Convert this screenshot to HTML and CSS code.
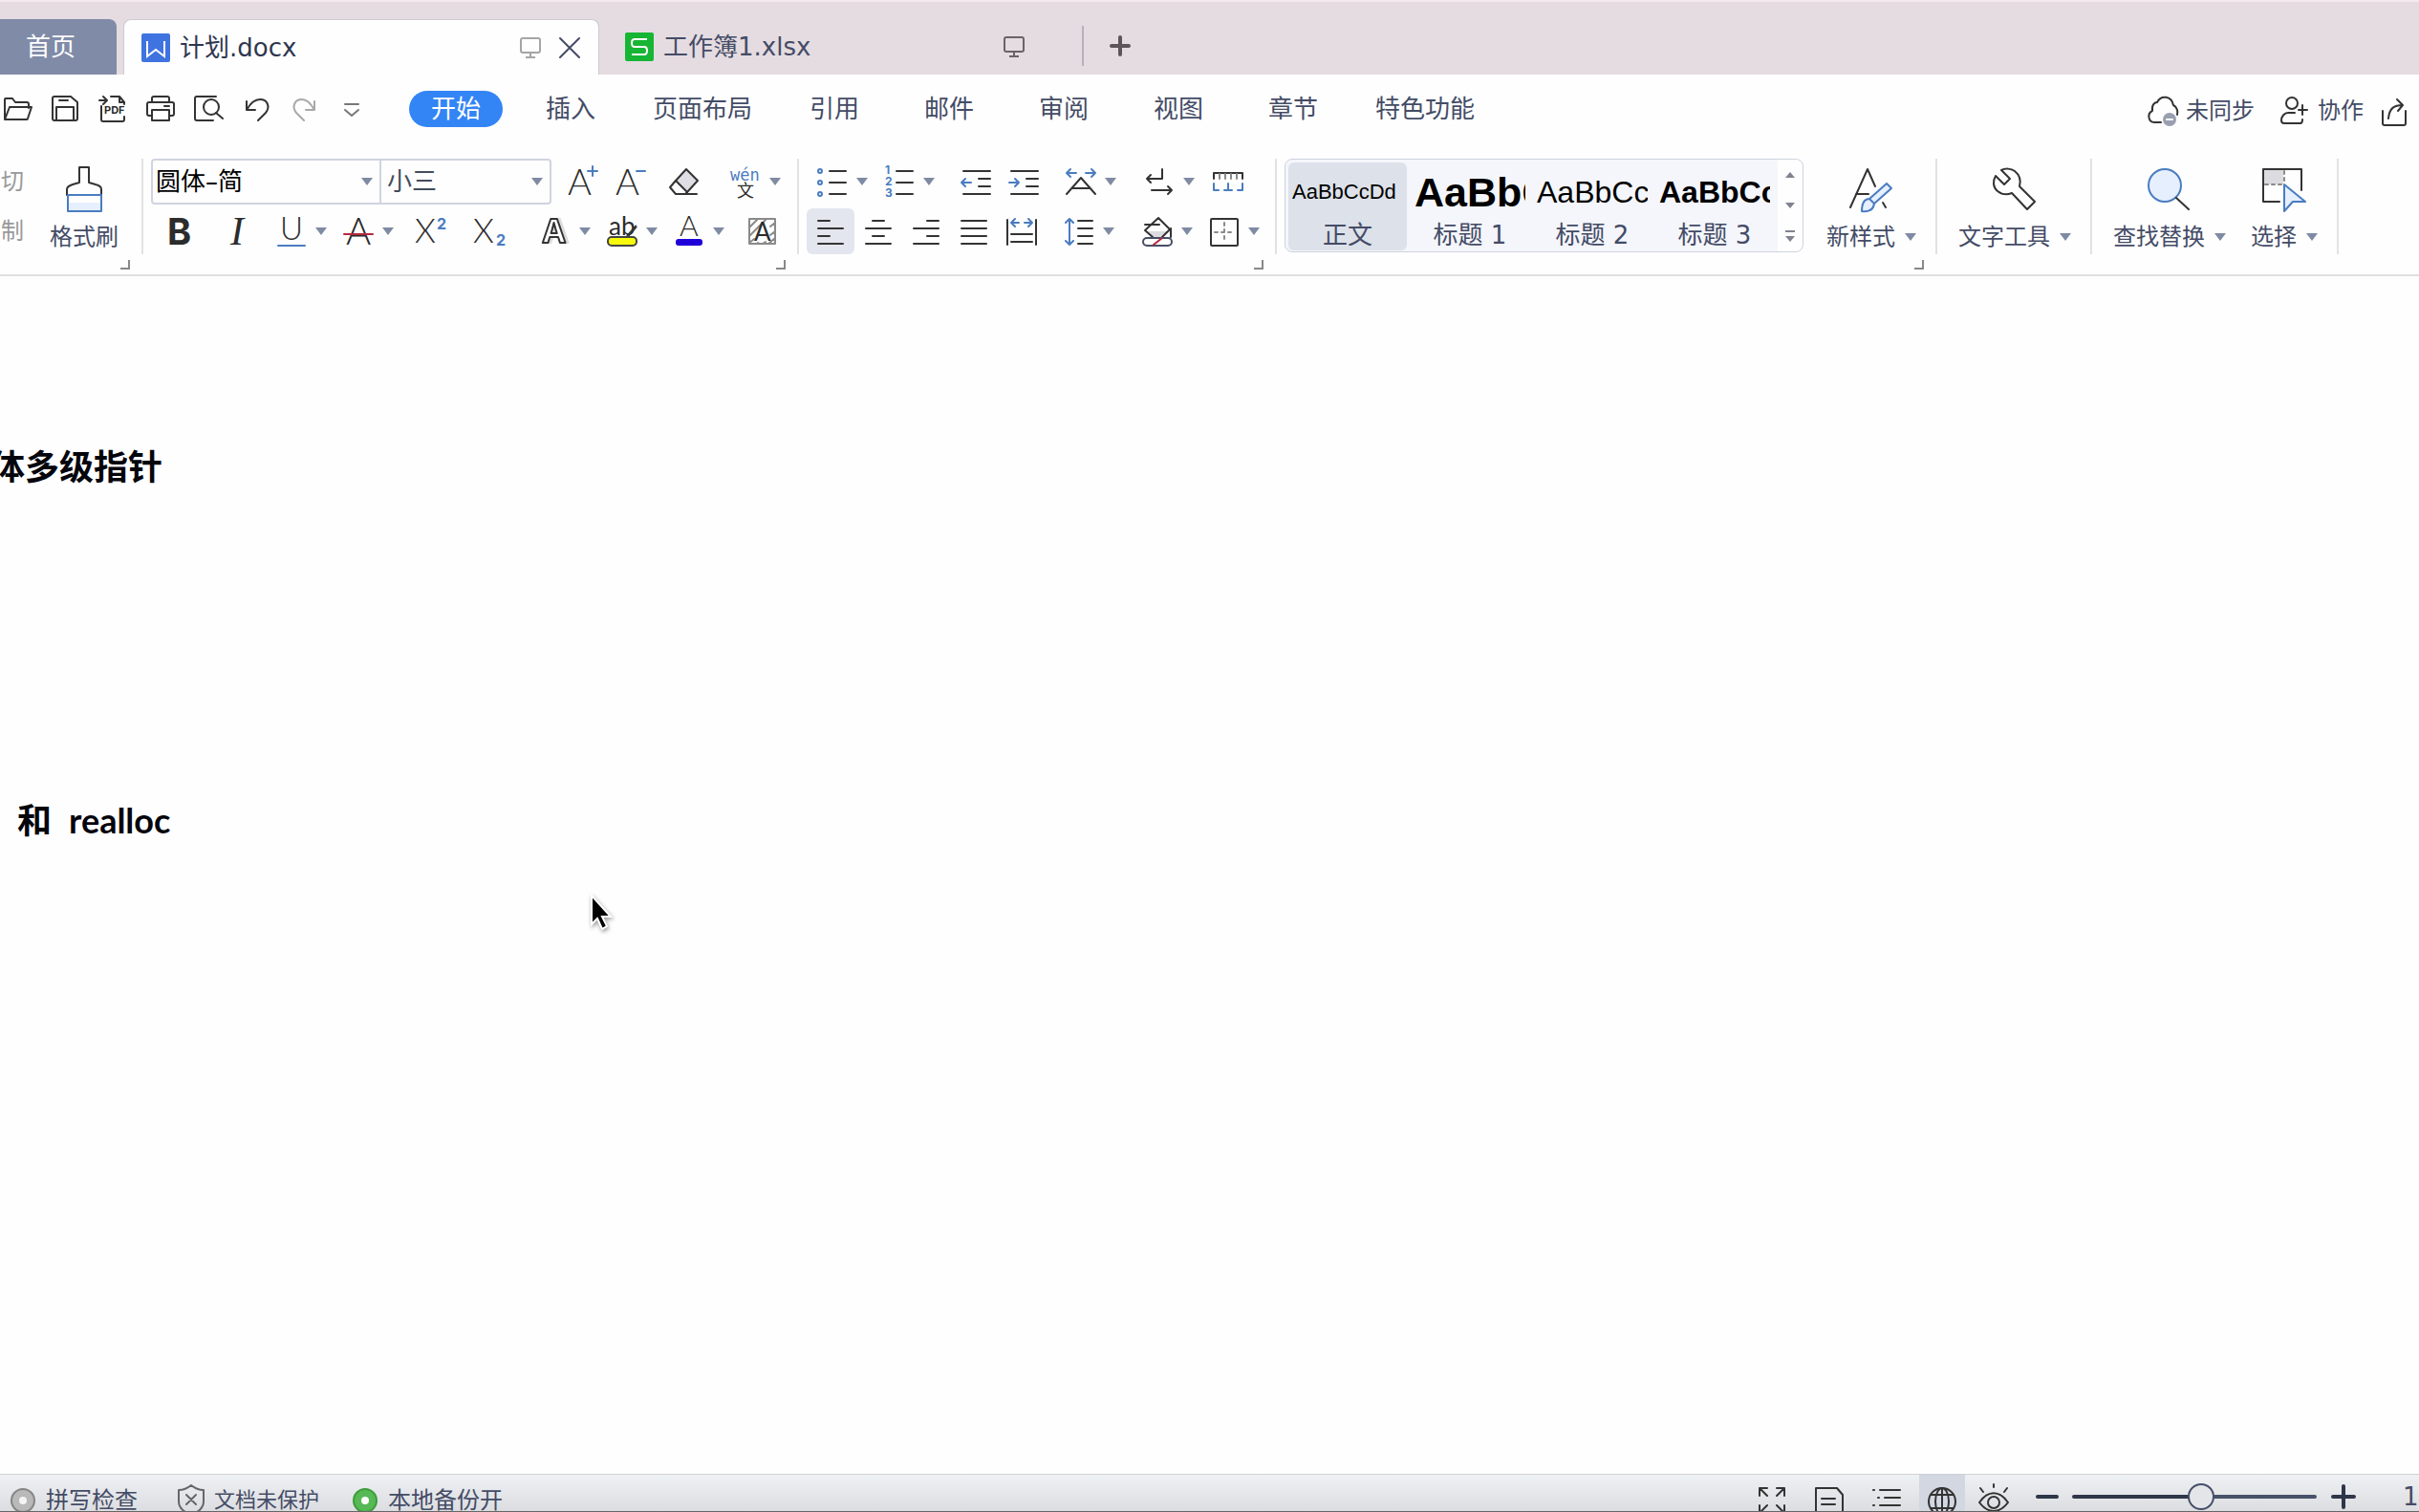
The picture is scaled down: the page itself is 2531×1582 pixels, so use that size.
FILE: index.html
```
<!DOCTYPE html>
<html lang="zh-CN">
  <head>
    <meta charset="UTF-8" />
    <meta name="viewport" content="width=device-width,initial-scale=1.0" />
    <title>计划.docx</title>
    <link rel="stylesheet" href="styles.css">
  </head>
  <body>
    <!-- shared shapes -->
    <svg class="defs" aria-hidden="true">
      <symbol id="caret" viewBox="0 0 12 8"><path d="M0 0h12L6 8z"/></symbol>
      <symbol id="monitor" viewBox="0 0 24 24"><rect x="2" y="2" width="20" height="15" rx="2"/><path d="M12 17v5M7 22h10"/></symbol>
    </svg>

    <header class="tabbar">
      <button class="tab home">首页</button>
      <div class="tab doc active">
        <svg class="logo" viewBox="0 0 30 30"><rect width="30" height="30" rx="2" fill="#3f73e0"/><path d="M6 8v16l9-7 9 7V8" fill="none" stroke="#fff" stroke-width="2"/></svg>
        <span class="name">计划.docx</span>
        <svg class="screen"><use href="#monitor"/></svg>
        <button class="close" aria-label="关闭"><svg class="icon" viewBox="0 0 32 32"><path d="M6 6l20 20M26 6L6 26"/></svg></button>
      </div>
      <div class="tab doc sheet">
        <svg class="logo" viewBox="0 0 30 30"><rect width="30" height="30" rx="2" fill="#17b534"/><path d="M23 7H10q-3 0-3 4t3 4h10q3 0 3 4t-3 4H7" fill="none" stroke="#fff" stroke-width="2"/></svg>
        <span class="name">工作簿1.xlsx</span>
        <svg class="screen"><use href="#monitor"/></svg>
      </div>
      <button class="add" aria-label="新建"><svg class="icon" viewBox="0 0 32 32"><path d="M16 7v18M7 16h18"/></svg></button>
    </header>

    <div class="menubar">
      <div class="quick">
        <button class="tool" aria-label="打开"><svg class="icon" viewBox="0 0 32 32"><path d="M3 27V6q0-1 1-1h7l3 4h12q2 0 2 2v4M3 27l5-13h23l-4 12q0 1-1 1z"/></svg></button>
        <button class="tool" aria-label="保存"><svg class="icon" viewBox="0 0 32 32"><path d="M5 3h17l7 6v17q0 2-2 2H5q-2 0-2-2V5q0-2 2-2zM7 28V14h18v14M10 7h9"/></svg></button>
        <button class="tool" aria-label="输出为PDF"><svg class="icon" viewBox="0 0 32 32"><path d="M14 3h9l5 6v2M23 3v6h5M4 13v14M4 27q0 2 2 2h20q2 0 2-2v-3M2 7h7M6 3l4 4-4 4"/><text x="7" y="21" class="bold" font-size="11">PDF</text></svg></button>
        <button class="tool" aria-label="打印"><svg class="icon" viewBox="0 0 32 32"><path d="M7 9V5q0-2 2-2h14q2 0 2 2v4M7 23H4q-2 0-2-2V11q0-2 2-2h24q2 0 2 2v10q0 2-2 2h-3M7 17h18v11H7zM20 13h5"/></svg></button>
        <button class="tool" aria-label="打印预览"><svg class="icon" viewBox="0 0 32 32"><path d="M24 3H4Q2 3 2 5v21q0 2 2 2h17"/><circle cx="19" cy="14" r="8"/><path d="M24 20l7 6"/></svg></button>
        <button class="tool" aria-label="撤销"><svg class="icon" viewBox="0 0 32 32"><path d="M6 8v9h9M6 17c4-7 9-11 14-11 8 0 11 8 6 14l-8 8"/></svg></button>
        <button class="tool faded" aria-label="恢复"><svg class="icon" viewBox="0 0 32 32"><path d="M27 8v9h-9M27 17C23 10 19 6 14 6 6 6 3 14 8 20l8 8"/></svg></button>
        <button class="tool more" aria-label="自定义"><svg class="icon" viewBox="0 0 32 32"><path d="M9 11h14M9 17l7 6 7-6"/></svg></button>
      </div>
      <nav class="menu">
        <a href="#" class="current">开始</a>
        <a href="#">插入</a>
        <a href="#">页面布局</a>
        <a href="#">引用</a>
        <a href="#">邮件</a>
        <a href="#">审阅</a>
        <a href="#">视图</a>
        <a href="#">章节</a>
        <a href="#">特色功能</a>
      </nav>
      <div class="account">
        <button class="sync"><svg class="icon" viewBox="0 0 32 32"><path d="M14 28H7C1 28-1 19 5 16 4 9 8 7 10 7c4-8 15-7 17 3 4 2 5 7 4 10"/><circle cx="23" cy="25" r="7" class="dot"/><path d="M20 25h6" class="white"/></svg>未同步</button>
        <button><svg class="icon" viewBox="0 0 32 32"><circle cx="13" cy="8" r="6"/><path d="M16 18H9c-4 0-7 4-7 8 0 2 1 3 3 3h17c2 0 2-2 2-4M20 15h9M24 10v10"/></svg>协作</button>
        <button aria-label="分享"><svg class="icon" viewBox="0 0 32 32"><path d="M4 16v13q0 2 2 2h20q2 0 2-2V16M10 24C11 13 16 10 25 10M19 4l6 6-5 6"/></svg></button>
      </div>
    </div>

    <div class="ribbon">
      <section class="group clipboard">
        <div class="cut">
          <button>剪切</button>
          <button>复制</button>
        </div>
        <button class="big">
          <svg class="icon" viewBox="0 0 48 48"><path d="M6 30v-6c0-3 3-4 6-5l7-2V1h10v16l7 2c4 1 6 2 6 5v6"/><rect x="7" y="30" width="35" height="17" class="blue"/><path d="M8 38h33v8H8z" class="tint"/></svg>
          <span>格式刷</span>
        </button>
        <i class="corner"></i>
      </section>

      <section class="group font">
        <div class="row">
          <div class="combo family">
            <select aria-label="字体"><option>圆体–简</option></select>
            <svg class="caret"><use href="#caret"/></svg>
          </div>
          <div class="combo size">
            <select aria-label="字号"><option>小三</option></select>
            <svg class="caret"><use href="#caret"/></svg>
          </div>
          <button class="tool sp-8" aria-label="增大字号"><svg class="icon" viewBox="0 0 32 32"><text x="0" y="30" font-size="38">A</text><path d="M21 5h10M26 0v10" class="blue"/></svg></button>
          <button class="tool" aria-label="减小字号"><svg class="icon" viewBox="0 0 32 32"><text x="0" y="30" font-size="38">A</text><path d="M22 5h9" class="blue"/></svg></button>
          <button class="tool wide" aria-label="清除格式"><svg class="icon" viewBox="0 0 32 32"><path d="M19 3l12 12-11 12L8 15z" class="grey"/><path d="M8 15l-6 7 6 7h22M20 27l-2 2"/></svg></button>
          <button class="split sp-12" aria-label="拼音指南"><svg class="icon" viewBox="0 0 32 32"><text x="0" y="15" class="mono bluetext" font-size="17">wén</text><text x="7" y="32" class="cjk" font-size="18">文</text></svg><svg class="caret"><use href="#caret"/></svg></button>
        </div>
        <div class="row">
          <button class="tool wide" aria-label="加粗"><svg class="icon" viewBox="0 0 32 32"><text x="3" y="30" class="bold" font-size="38">B</text></svg></button>
          <button class="tool wide" aria-label="倾斜"><svg class="icon" viewBox="0 0 32 32"><text x="9" y="30" class="slant" font-size="42">I</text></svg></button>
          <button class="split sp-4" aria-label="下划线"><svg class="icon" viewBox="0 0 32 32"><text x="4" y="25" font-size="33">U</text><path d="M2 31h28" class="blue"/></svg><svg class="caret"><use href="#caret"/></svg></button>
          <button class="split" aria-label="删除线"><svg class="icon" viewBox="0 0 32 32"><text x="3" y="30" font-size="40">A</text><path d="M1 19h30" class="red"/></svg><svg class="caret"><use href="#caret"/></svg></button>
          <button class="tool wide" aria-label="上标"><svg class="icon" viewBox="0 0 32 32"><text x="-2" y="28" font-size="35">X</text><text x="21" y="14" class="bold bluetext" font-size="16">2</text></svg></button>
          <button class="tool wide" aria-label="下标"><svg class="icon" viewBox="0 0 32 32"><text x="-1" y="28" font-size="35">X</text><text x="23" y="31" class="bold bluetext" font-size="16">2</text></svg></button>
          <button class="split sp-16" aria-label="文字效果"><svg class="icon" viewBox="0 0 32 32"><text x="2" y="28" class="bold hollow" font-size="34">A</text></svg><svg class="caret"><use href="#caret"/></svg></button>
          <button class="split" aria-label="突出显示"><svg class="icon" viewBox="0 0 32 32"><text x="2" y="20" class="regular" font-size="26">ab</text><path d="M30 10l-8 9-2 3 3-1 8-9z" class="ink"/><rect x="1" y="22" width="30" height="9" rx="4" class="yellow"/></svg><svg class="caret"><use href="#caret"/></svg></button>
          <button class="split" aria-label="字体颜色"><svg class="icon" viewBox="0 0 32 32"><text x="6" y="21" font-size="30">A</text><rect x="3" y="25" width="26" height="5" rx="2" class="indigo"/></svg><svg class="caret"><use href="#caret"/></svg></button>
          <button class="tool wide" aria-label="字符底纹"><svg class="icon" viewBox="0 0 32 32"><path d="M2 3h27v26H2zM2 12l9-9M2 21L20 3M12 29l-1-1M2 28l5-4M24 11l5-4M24 20l5-4M16 29l3-2M22 29l7-6" class="hatch"/><text x="7" y="26" class="regular" font-size="26">A</text></svg></button>
        </div>
        <i class="corner"></i>
      </section>

      <section class="group para">
        <div class="row">
          <button class="split sp-4" aria-label="项目符号"><svg class="icon" viewBox="0 0 32 32"><path d="M13 5h17M13 17h17M13 29h17"/><g class="blue"><circle cx="3" cy="5" r="2"/><circle cx="3" cy="17" r="2"/><circle cx="3" cy="29" r="2"/></g></svg><svg class="caret"><use href="#caret"/></svg></button>
          <button class="split" aria-label="编号"><svg class="icon" viewBox="0 0 32 32"><path d="M13 5h17M13 17h17M13 29h17"/><text x="1" y="8" class="bold bluetext" font-size="12">1</text><text x="1" y="20" class="bold bluetext" font-size="12">2</text><text x="1" y="32" class="bold bluetext" font-size="12">3</text></svg><svg class="caret"><use href="#caret"/></svg></button>
          <button class="tool sp-8" aria-label="减少缩进"><svg class="icon" viewBox="0 0 32 32"><path d="M3 5h28M19 13h12M19 21h12M3 29h28"/><path d="M1 17h10M5 13l-4 4 4 4" class="blue"/></svg></button>
          <button class="tool" aria-label="增加缩进"><svg class="icon" viewBox="0 0 32 32"><path d="M3 5h28M19 13h12M19 21h12M3 29h28"/><path d="M1 17h10M7 13l4 4-4 4" class="blue"/></svg></button>
          <button class="split sp-12" aria-label="中文版式"><svg class="icon" viewBox="0 0 32 32"><path d="M1 29l15-17 15 17M7 23h18"/><path d="M1 7h10M5 3L1 7l4 4M21 7h10M27 3l4 4-4 4" class="blue"/></svg><svg class="caret"><use href="#caret"/></svg></button>
          <button class="split sp-12" aria-label="换行符"><svg class="icon" viewBox="0 0 32 32"><path d="M19 3v10H3M7 9l-4 4 4 4M8 25h21M25 21l4 4-4 4"/></svg><svg class="caret"><use href="#caret"/></svg></button>
          <button class="tool" aria-label="标尺"><svg class="icon" viewBox="0 0 32 32"><path d="M1 13V7h30v6"/><path d="M7 8v5M13 8v5M19 8v5M25 8v5" class="hatch"/><path d="M1 18v7h5M31 18v7h-5M16 18v7M12 25h8" class="blue"/></svg></button>
        </div>
        <div class="row">
          <button class="tool on" aria-label="左对齐"><svg class="icon" viewBox="0 0 32 32"><path d="M3 5h12M3 13h26M3 21h12M3 29h26"/></svg></button>
          <button class="tool" aria-label="居中"><svg class="icon" viewBox="0 0 32 32"><path d="M10 5h12M3 13h26M10 21h12M3 29h26"/></svg></button>
          <button class="tool" aria-label="右对齐"><svg class="icon" viewBox="0 0 32 32"><path d="M17 5h12M3 13h26M17 21h12M3 29h26"/></svg></button>
          <button class="tool" aria-label="两端对齐"><svg class="icon" viewBox="0 0 32 32"><path d="M3 5h26M3 13h26M3 21h26M3 29h26"/></svg></button>
          <button class="tool" aria-label="分散对齐"><svg class="icon" viewBox="0 0 32 32"><path d="M1 4v26M31 4v26M5 19h22M5 27h22"/><path d="M5 7h8M9 3L5 7l4 4M19 7h8M23 3l4 4-4 4" class="blue"/></svg></button>
          <button class="split sp-12" aria-label="行距"><svg class="icon" viewBox="0 0 32 32"><path d="M15 5h15M15 13h15M15 21h15M15 29h15"/><path d="M6 3v27M2 7l4-4 4 4M2 26l4 4 4-4" class="blue"/></svg><svg class="caret"><use href="#caret"/></svg></button>
          <button class="split sp-12" aria-label="底纹颜色"><svg class="icon" viewBox="0 0 32 32"><path d="M5 16h22l-6 6H10z" class="shade"/><path d="M11 22l-8-7L17 2l12 12-8 8M3 9h15M30 13v9"/><rect x="1" y="23" width="30" height="8" rx="4" class="slate"/><path d="M12 30l9-7" class="red"/></svg><svg class="caret"><use href="#caret"/></svg></button>
          <button class="split" aria-label="边框"><svg class="icon" viewBox="0 0 32 32"><rect x="2" y="3" width="28" height="28" rx="1"/><path d="M16 7v20M6 17h20" class="hatch dash"/></svg><svg class="caret"><use href="#caret"/></svg></button>
        </div>
        <i class="corner"></i>
      </section>

      <section class="group styles">
        <div class="gallery">
          <button class="style normal on"><span class="preview">AaBbCcDd</span><span class="label">正文</span></button>
          <button class="style h1"><span class="preview">AaBbC</span><span class="label">标题 1</span></button>
          <button class="style h2"><span class="preview">AaBbCc</span><span class="label">标题 2</span></button>
          <button class="style h3"><span class="preview">AaBbCc</span><span class="label">标题 3</span></button>
          <div class="scroller">
            <button aria-label="上一行"><svg viewBox="0 0 12 12"><path d="M1 9l5-6 5 6z"/></svg></button>
            <button aria-label="下一行"><svg viewBox="0 0 12 12"><path d="M1 3l5 6 5-6z"/></svg></button>
            <button aria-label="更多样式"><svg viewBox="0 0 12 12"><path d="M1 0h10v2H1zM1 6l5 6 5-6z"/></svg></button>
          </div>
        </div>
        <button class="big">
          <svg class="icon" viewBox="0 0 48 48"><path d="M2 43L20 3l8 18M8 29h13M36 38l3 5"/><path d="M40 18l5 5-18 16-5-5zM22 34c-6 0-8 5-8 13 7 1 12-1 13-8" class="blue lit"/></svg>
          <span>新样式<svg class="caret"><use href="#caret"/></svg></span>
        </button>
        <i class="corner"></i>
      </section>

      <section class="group">
        <button class="big">
          <svg class="icon" viewBox="0 0 48 48"><path d="M10 4l9 9-6 6-9-9c-3 5-3 12 2 16 5 4 10 4 15 2l16 17 8-8-16-16c2-7 0-12-5-16-4-3-10-3-14-1z"/></svg>
          <span>文字工具<svg class="caret"><use href="#caret"/></svg></span>
        </button>
      </section>

      <section class="group">
        <button class="big">
          <svg class="icon" viewBox="0 0 48 48"><circle cx="19" cy="20" r="17" class="blue lit"/><path d="M31 33l13 12"/></svg>
          <span>查找替换<svg class="caret"><use href="#caret"/></svg></span>
        </button>
        <button class="big next">
          <svg class="icon" viewBox="0 0 48 48"><path d="M3 4h20v15H3z" class="block"/><path d="M42 25V3H2v34h17"/><path d="M24 5v13M4 19h19" class="hatch dash"/><path d="M24 19l22 18H33l-9 10z" class="blue lit"/></svg>
          <span>选择<svg class="caret"><use href="#caret"/></svg></span>
        </button>
      </section>
    </div>

    <main class="document">
      <p>体多级指针</p>
      <p class="second"><span>和</span><span>realloc</span></p>
      <svg class="pointer" viewBox="0 0 24 38"><path d="M2 2v30l6-6 5 11 5-3-5-10h9z"/></svg>
    </main>

    <footer class="statusbar">
      <div class="checks">
        <button class="spell"><svg viewBox="0 0 28 28"><circle cx="14" cy="14" r="12" fill="#b9b9b9" stroke="#858585" stroke-width="2"/><circle cx="14" cy="14" r="4" fill="#f4f4f4"/></svg>拼写检查</button>
        <button class="protect"><svg class="icon" viewBox="0 0 32 32"><path d="M16 0q6 5 13 5v12q0 9-13 14Q3 26 3 17V5q7 0 13-5zM11 10l10 10M21 10L11 20"/></svg>文档未保护</button>
        <button class="backup"><svg viewBox="0 0 28 28"><circle cx="14" cy="14" r="12" fill="#56b956" stroke="#3e9d3b" stroke-width="2"/><circle cx="14" cy="14" r="4" fill="#fff"/></svg>本地备份开</button>
      </div>
      <div class="views">
        <button aria-label="全屏"><svg class="icon" viewBox="0 0 32 32"><path d="M3 11V3h8M3 3l8 8M29 11V3h-8M29 3l-8 8M3 21v8h8M3 29l8-8M29 21v8h-8M29 29l-8-8"/></svg></button>
        <button aria-label="页面视图"><svg class="icon" viewBox="0 0 32 32"><path d="M2 3h22l6 7v20H2zM8 14h14M8 20h14"/></svg></button>
        <button aria-label="大纲"><svg class="icon" viewBox="0 0 32 32"><path d="M9 5h21M14 13h16M9 21h21M2 5h1M7 13h1M2 21h1"/></svg></button>
        <button class="on" aria-label="Web版式"><svg class="icon" viewBox="0 0 32 32"><circle cx="16" cy="17" r="14"/><ellipse cx="16" cy="17" rx="7" ry="14"/><path d="M16 3v28M4 10h24M4 24h24"/></svg></button>
        <button class="eye" aria-label="护眼模式"><svg class="icon" viewBox="0 0 32 32"><path d="M1 18C10 5 22 5 31 18 22 30 10 30 1 18zM16-1v3M2 3l3 4M30 3l-3 4"/><circle cx="16" cy="18" r="6"/></svg></button>
        <div class="zoom">
          <button class="minus" aria-label="缩小"><svg class="icon" viewBox="0 0 32 32"><path d="M6 16h20"/></svg></button>
          <input type="range" min="0" max="100" value="53" aria-label="显示比例">
          <button class="plus" aria-label="放大"><svg class="icon" viewBox="0 0 32 32"><path d="M5 16h22M16 5v22"/></svg></button>
          <span class="percent">1</span>
        </div>
      </div>
    </footer>
  </body>
</html>
```

FILE: styles.css
```
* {
  box-sizing: border-box;
}
body {
  margin: 0;
  height: 100vh;
  display: flex;
  flex-direction: column;
  overflow: hidden;
  background-color: #fefefe;
  color: #444c66;
  font-family: "DejaVu Sans", "Noto Sans CJK SC", sans-serif;
  font-size: 24px;
  line-height: 32px;
}
button {
  display: flex;
  align-items: center;
  justify-content: center;
  flex: none;
  padding: 0;
  border: none;
  background: none;
  color: inherit;
  font: inherit;
  white-space: nowrap;
  cursor: pointer;
}
svg {
  flex: none;
  overflow: visible;
}
.defs {
  position: absolute;
  width: 0;
  height: 0;
}

/* icons */
.icon {
  width: 32px;
  height: 32px;
  fill: none;
  stroke: #333;
  stroke-width: 2;
  stroke-linecap: round;
  stroke-linejoin: round;
}
.icon text {
  fill: #2c2c2c;
  stroke: none;
  font-family: Lato, sans-serif;
  font-weight: 300;
}
.icon .regular {
  font-weight: 400;
}
.icon .bold {
  font-family: Inter, sans-serif;
  font-weight: 700;
}
.icon .mono {
  font-family: "DejaVu Sans Mono", monospace;
  font-weight: 400;
}
.icon .cjk {
  font-family: "Noto Sans CJK SC", sans-serif;
  font-weight: 400;
}
.icon .slant {
  font-family: "Liberation Serif", serif;
  font-style: italic;
  font-weight: 400;
}
.icon .bluetext {
  fill: #4a7cc0;
}
.icon .hollow {
  fill: #fff;
  stroke: #333;
  filter: drop-shadow(3px 0 0 #ddd);
}
.blue {
  stroke: #4a7cc0;
}
.lit {
  fill: #e6effd;
}
.tint {
  fill: #e6effd;
  stroke: none;
}
.red {
  stroke: #b5273f;
}
.grey {
  fill: #dedee4;
}
.shade,
.block {
  fill: #dcdce0;
  stroke: none;
}
.yellow {
  fill: #f7fb0a;
  stroke: #444;
}
.indigo {
  fill: #1f00d8;
  stroke: #1f00d8;
}
.slate {
  fill: #fff;
  stroke: #474e66;
}
.hatch {
  stroke: #8a8a8a;
}
.dash {
  stroke-dasharray: 3 4;
}
.ink {
  fill: #333;
  stroke-width: 1;
}
.dot {
  fill: #9a9fb0;
  stroke: none;
}
.white {
  stroke: #fff;
}
.caret {
  width: 12px;
  height: 8px;
  fill: #7f8aa3;
}

/* document tabs */
.tabbar {
  display: flex;
  align-items: flex-end;
  flex: none;
  height: 78px;
  border-top: 2px solid #f3e9ee;
  background-color: #e5dce1;
  font-size: 26px;
}
.tab {
  display: flex;
  align-items: center;
  height: 58px;
}
.home {
  width: 122px;
  margin-right: 7px;
  padding-right: 16px;
  border-radius: 0 8px 0 0;
  background-color: #808ba8;
  color: #fff;
}
.doc {
  width: 498px;
  padding: 0 14px 0 18px;
}
.active {
  border: 1px solid #cdcbd2;
  border-bottom: none;
  border-radius: 8px 8px 0 0;
  background-color: #fefefe;
  color: #2f3650;
}
.sheet {
  width: 505px;
  padding: 0 59px 0 27px;
}
.logo {
  width: 30px;
  height: 30px;
  margin-right: 10px;
}
.name {
  flex: 1;
}
.screen {
  width: 24px;
  height: 24px;
  fill: none;
  stroke: #a5a5a5;
  stroke-width: 2;
}
.sheet .screen {
  stroke: #6b6268;
}
.close {
  margin-left: 13px;
}
.close .icon {
  stroke: #444c66;
}
.add {
  height: 42px;
  margin-bottom: 9px;
  padding: 0 22px;
  border-left: 2px solid #b7b1b9;
}
.add .icon {
  stroke: #5c555a;
  stroke-width: 4;
}

/* menu row */
.menubar {
  display: flex;
  align-items: center;
  flex: none;
  height: 72px;
}
.quick {
  display: flex;
  margin-left: -7px;
}
.faded .icon {
  stroke: #a8a8a8;
}
.more .icon {
  stroke: #777;
}
.menu {
  display: flex;
  gap: 22px;
  margin-left: 35px;
}
.menu a {
  min-width: 98px;
  padding: 0 15px;
  border-radius: 19px;
  color: inherit;
  font-size: 26px;
  line-height: 38px;
  text-align: center;
  text-decoration: none;
}
.menu .current {
  background-color: #3385f5;
  color: #fff;
}
.account {
  display: flex;
  gap: 16px;
  margin-left: auto;
  padding: 4px 10px 0 0;
}
.account button {
  gap: 8px;
}
.account .sync {
  padding-right: 10px;
}

/* ribbon */
.ribbon {
  display: flex;
  flex: none;
  padding: 16px 0 21px;
  border-bottom: 2px solid #e0e0e2;
}
.group {
  position: relative;
  display: flex;
  flex: none;
  height: 100px;
  padding: 0 20px 0 22px;
  border-right: 2px solid #e2e2e4;
}
.clipboard {
  padding: 0 24px 0 0;
}
.cut {
  display: grid;
  gap: 4px;
  grid-template-rows: 48px 48px;
  justify-items: end;
  justify-content: end;
  width: 25px;
  margin-right: 27px;
  color: #999;
}
.corner {
  position: absolute;
  right: 12px;
  bottom: -16px;
  width: 10px;
  height: 10px;
  border: solid #888;
  border-width: 0 2px 2px 0;
}
.font,
.para {
  flex-direction: column;
  gap: 4px;
  padding: 0 6px 0 8px;
}
.row {
  display: flex;
  height: 48px;
}
.tool {
  width: 50px;
  height: 48px;
}
.wide {
  width: 60px;
}
.split {
  justify-content: flex-start;
  gap: 9px;
  width: 70px;
  padding-left: 7px;
}
.on {
  border-radius: 6px;
  background-color: #e3e6ef;
}
.sp-4 {
  margin-left: 4px;
}
.sp-8 {
  margin-left: 8px;
}
.sp-12 {
  margin-left: 12px;
}
.sp-16 {
  margin-left: 16px;
}
.combo {
  display: grid;
  align-items: center;
  border: 2px solid #d0d4e0;
  border-radius: 4px 0 0 4px;
}
.combo select,
.combo .caret {
  grid-area: 1 / 1;
}
.combo select {
  width: 100%;
  height: 44px;
  padding: 0 4px 0 3px;
  border: none;
  background: none;
  color: #444c5c;
  font: inherit;
  font-size: 26px;
  appearance: none;
}
.combo .caret {
  justify-self: end;
  margin-right: 7px;
  pointer-events: none;
}
.family {
  width: 241px;
}
.family select {
  color: #000;
}
.size {
  width: 178px;
  border-left: none;
  border-radius: 0 4px 4px 0;
}
.size select {
  padding-left: 6px;
}
.big {
  flex-direction: column;
  justify-content: flex-start;
  gap: 10px;
  padding-top: 8px;
}
.big .icon {
  width: 48px;
  height: 48px;
}
.big span {
  display: flex;
  align-items: center;
  gap: 10px;
}
.next {
  margin-left: 26px;
}

/* style gallery */
.styles {
  padding-left: 8px;
}
.gallery {
  display: flex;
  gap: 4px;
  height: 98px;
  margin-right: 24px;
  padding: 3px 0 2px 3px;
  border: 1px solid #cdd2de;
  border-radius: 8px;
  background-color: #f4f6fb;
}
.style {
  flex-direction: column;
  justify-content: flex-start;
  width: 124px;
  height: 92px;
}
.style.on {
  background-color: #dde1e9;
}
.preview {
  width: 116px;
  overflow: hidden;
  color: #000;
  font-family: "Liberation Sans", Arial, sans-serif;
  font-size: 32px;
  line-height: 62px;
  text-align: left;
}
.normal .preview {
  font-size: 22px;
}
.h1 .preview {
  font-size: 43px;
  font-weight: 700;
}
.h3 .preview {
  font-weight: 700;
}
.label {
  font-size: 26px;
  line-height: 28px;
}
.scroller {
  display: grid;
  width: 26px;
  margin: -3px 0 -2px;
  border-radius: 0 8px 8px 0;
  background-color: #fefefe;
}
.scroller svg {
  width: 12px;
  height: 12px;
  fill: #80838f;
}

/* page */
.document {
  position: relative;
  flex: 1;
  min-height: 0;
  padding-top: 172px;
  color: #05050c;
  font-family: Lato, "Noto Sans CJK SC", sans-serif;
  font-size: 36px;
  font-weight: 700;
  line-height: 54px;
}
.document p {
  margin: 0 0 316px -10px;
}
.document .second {
  display: flex;
  gap: 18px;
  margin: 0 0 0 18px;
}
.pointer {
  position: absolute;
  left: 617px;
  top: 646px;
  width: 24px;
  height: 38px;
  stroke: #fff;
  stroke-width: 2;
  filter: drop-shadow(1px 2px 2px #999);
}

/* status bar */
.statusbar {
  display: flex;
  align-items: flex-start;
  justify-content: space-between;
  flex: none;
  height: 40px;
  overflow: hidden;
  border-top: 1px solid #cfd2d6;
  border-bottom: 1px solid #666;
  background: linear-gradient(#eef1f3, #dcdde0);
}
.checks,
.views {
  display: flex;
  align-items: center;
  height: 54px;
}
.checks {
  padding-left: 10px;
}
.checks button {
  gap: 10px;
}
.checks button > svg:not(.icon) {
  width: 28px;
  height: 28px;
}
.checks .icon {
  stroke: #666;
}
.checks .protect {
  gap: 8px;
  margin: 0 34px 0 40px;
  font-size: 22px;
}
.views button {
  width: 60px;
  height: 54px;
}
.views .on {
  width: 48px;
  margin-left: 4px;
  border-radius: 0;
  background-color: #d3d7e1;
}
.zoom {
  display: flex;
  align-items: center;
  align-self: flex-start;
  height: 46px;
}
.zoom .icon {
  stroke: #2e3648;
  stroke-width: 4;
}
.zoom .minus {
  width: 52px;
}
.zoom .plus {
  width: 56px;
}
.zoom input {
  width: 256px;
  height: 28px;
  margin: 0;
  background: none;
  appearance: none;
}
.zoom input::-webkit-slider-runnable-track {
  height: 4px;
  border-radius: 2px;
  background: linear-gradient(90deg, #2e3648 50%, #465269 50%);
}
.zoom input::-webkit-slider-thumb {
  width: 28px;
  height: 28px;
  margin-top: -12px;
  border: 2px solid #465069;
  border-radius: 50%;
  background-color: #e4e5e9;
  appearance: none;
}
.percent {
  width: 17px;
  margin-left: 34px;
  font-size: 26px;
}
```
